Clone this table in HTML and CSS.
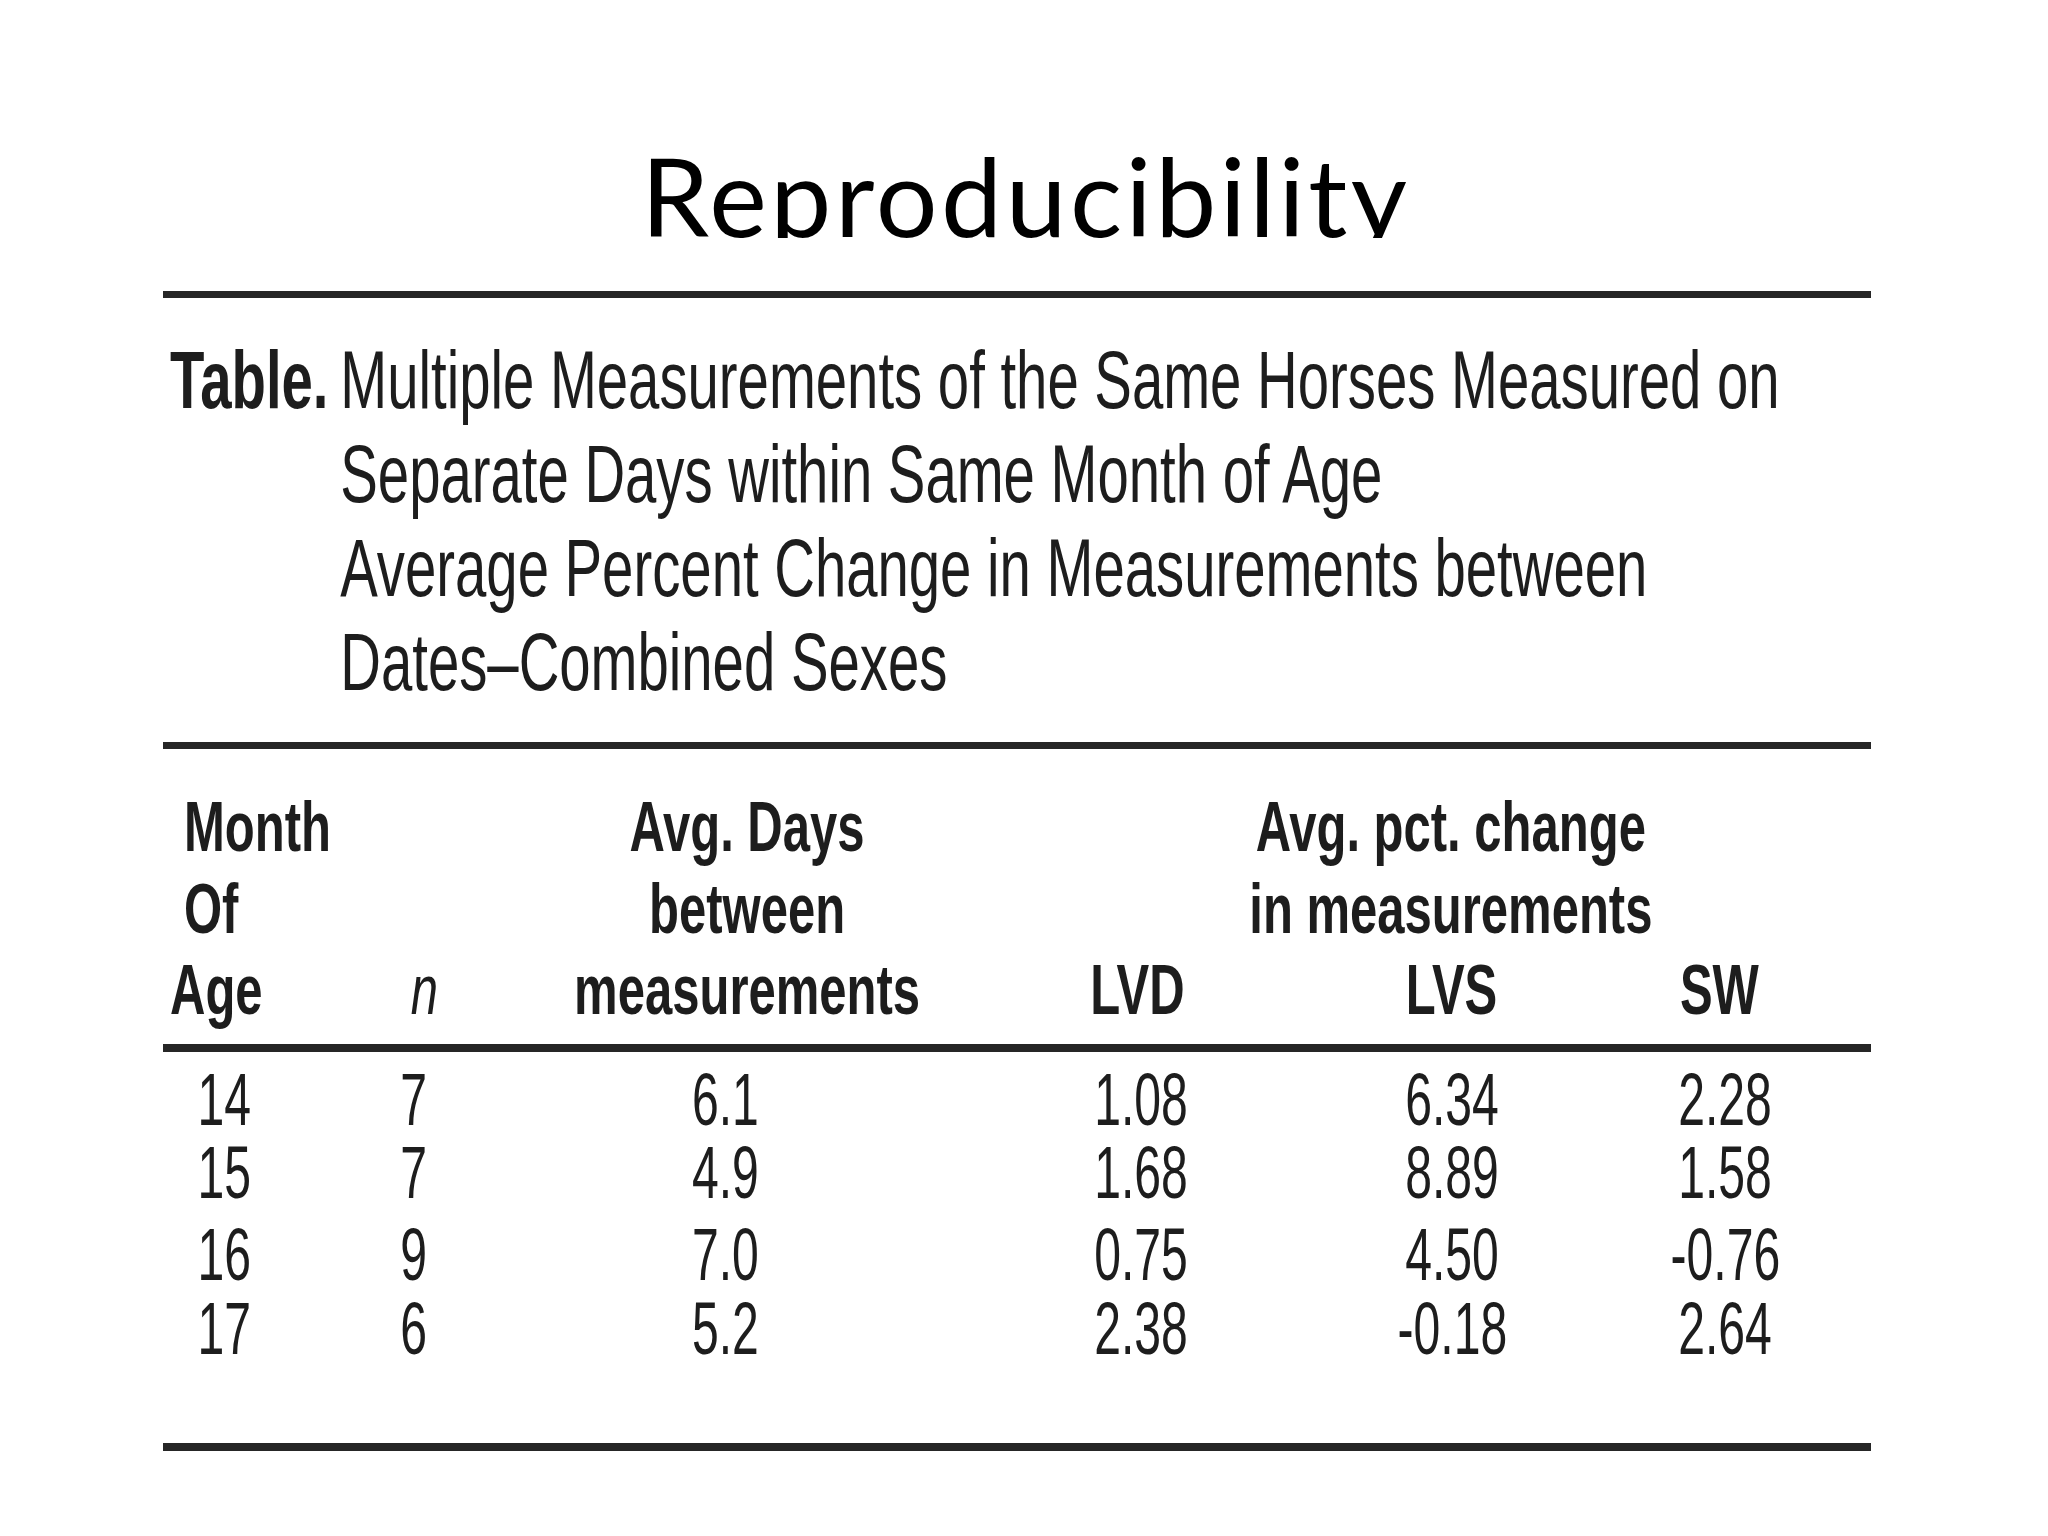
FILE: index.html
```html
<!DOCTYPE html>
<html lang="en">
<head>
<meta charset="utf-8">
<title>Reproducibility</title>
<link rel="stylesheet" href="styles.css">
</head>
<body>
<div class="slide">
  <h1 class="title"><span class="title-text">Reproducibility</span></h1>
  <div class="figure">
    <div class="rule"></div>
    <div class="caption">
      <div class="cap-text">
        <span class="cap-label">Table.</span>
        <div class="cap-lines">
          <div>Multiple Measurements of the Same Horses Measured on</div>
          <div>Separate Days within Same Month of Age</div>
          <div>Average Percent Change in Measurements between</div>
          <div>Dates–Combined Sexes</div>
        </div>
      </div>
    </div>
    <div class="rule"></div>
    <div class="thead">
      <div class="th th-first"><span class="h">Month</span><span class="h">Of</span><span class="h h-age">Age</span></div>
      <div class="th"><span class="h h-n">n</span></div>
      <div class="th"><span class="h">Avg. Days</span><span class="h">between</span><span class="h">measurements</span></div>
      <div class="th"><span class="h">LVD</span></div>
      <div class="th"><span class="h">Avg. pct. change</span><span class="h">in measurements</span><span class="h">LVS</span></div>
      <div class="th"><span class="h">SW</span></div>
    </div>
    <div class="rule rule-thick"></div>
    <div class="tbody">
      <div class="td"><span class="num">14</span></div>
      <div class="td"><span class="num">7</span></div>
      <div class="td"><span class="num">6.1</span></div>
      <div class="td"><span class="num">1.08</span></div>
      <div class="td"><span class="num">6.34</span></div>
      <div class="td"><span class="num">2.28</span></div>

      <div class="td"><span class="num">15</span></div>
      <div class="td"><span class="num">7</span></div>
      <div class="td"><span class="num">4.9</span></div>
      <div class="td"><span class="num">1.68</span></div>
      <div class="td"><span class="num">8.89</span></div>
      <div class="td"><span class="num">1.58</span></div>

      <div class="td"><span class="num">16</span></div>
      <div class="td"><span class="num">9</span></div>
      <div class="td"><span class="num">7.0</span></div>
      <div class="td"><span class="num">0.75</span></div>
      <div class="td"><span class="num">4.50</span></div>
      <div class="td"><span class="num">-0.76</span></div>

      <div class="td"><span class="num">17</span></div>
      <div class="td"><span class="num">6</span></div>
      <div class="td"><span class="num">5.2</span></div>
      <div class="td"><span class="num">2.38</span></div>
      <div class="td"><span class="num">-0.18</span></div>
      <div class="td"><span class="num">2.64</span></div>
    </div>
    <div class="rule rule-thick"></div>
  </div>
</div>
</body>
</html>
```

FILE: styles.css
```css
* { box-sizing: border-box; }

html, body {
  margin: 0;
  padding: 0;
  background: #fff;
}

.slide {
  width: 2048px;
  height: 1536px;
  overflow: hidden;
  background: #fff;
}

.title {
  margin: 0;
  height: 238px;
  display: flex;
  justify-content: center;
  align-items: flex-end;
  overflow: hidden;
  font-family: Lato, "Open Sans", sans-serif;
  font-weight: 400;
  font-size: 109px;
  letter-spacing: 3.5px;
  color: #000;
}

.title-text {
  line-height: 1.2;
  margin-bottom: -23px;
  padding-left: 3.5px;
}

.figure {
  margin-left: 163px;
  padding-top: 53px;
  font-family: "Liberation Sans", Arial, sans-serif;
  color: #1d1d1d;
}

.rule {
  width: 1708px;
  height: 7px;
  background: #262626;
}

.rule-thick { height: 8px; }

/* caption */
.caption {
  padding: 35px 0 33px 7px;
  font-size: 81px;
  line-height: 94px;
}

.cap-text {
  display: flex;
  white-space: nowrap;
  transform: scaleX(0.695);
  transform-origin: 0 0;
}

.cap-label {
  flex: none;
  width: 245px;
  font-weight: bold;
}

/* header */
.thead {
  display: grid;
  grid-template-columns: 177px 168px 478px 302px 326px 210px;
  align-items: end;
  padding: 38px 0 12px;
  font-size: 70px;
  font-weight: bold;
  line-height: 81.5px;
}

.th {
  display: flex;
  flex-direction: column;
  align-items: center;
}

.th-first {
  align-items: flex-start;
  padding-left: 21px;
}

.h {
  white-space: nowrap;
  transform: scaleX(0.7);
}

.th-first .h { transform-origin: left center; }

.h-age { margin-left: -14px; }

.h-n {
  font-style: italic;
  font-weight: normal;
}

/* body */
.tbody {
  display: grid;
  grid-template-columns: 122px 258px 364px 468px 154px 392px;
  grid-template-rows: 73px 82px 74px 74px;
  padding: 11px 0 77px;
  font-size: 74px;
  line-height: 74px;
}

.td {
  display: flex;
  justify-content: center;
}

.num {
  white-space: nowrap;
  transform: scaleX(0.65);
}
```
